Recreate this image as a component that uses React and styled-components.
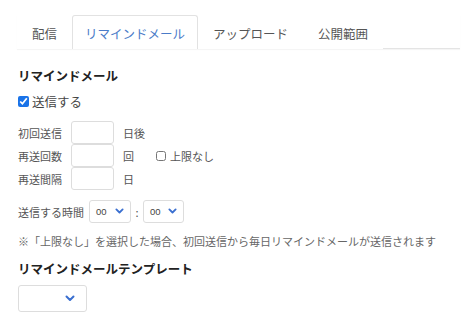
import styled, { createGlobalStyle } from "styled-components";

const GlobalStyle = createGlobalStyle`
  body {
    margin: 0;
    background: #fff;
    font-family: "Noto Sans CJK JP", "Noto Sans", sans-serif;
    color: #333;
  }
`

const tabs = ["配信", "リマインドメール", "アップロード", "公開範囲"];

const Chevron = ({ size = 9 }) => (
  <svg width={size} height={size * 0.7} viewBox="0 0 10 7">
    <polyline points="1.5,1.5 5,5 8.5,1.5" fill="none" stroke="#3a6fd0" strokeWidth="2" strokeLinecap="round" strokeLinejoin="round" />
  </svg>
)

const App = () => {
  return (
    <Page>
      <GlobalStyle />
      <TabBar>
        {tabs.map((t, i) => (
          <Tab key={t} $active={i === 1}>{t}</Tab>
        ))}
      </TabBar>

      <Heading>リマインドメール</Heading>
      <CheckLabel>
        <Check type="checkbox" defaultChecked />
        送信する
      </CheckLabel>

      <Rows>
        <Row>
          <Label>初回送信</Label>
          <NumInput />
          <Unit>日後</Unit>
        </Row>
        <Row>
          <Label>再送回数</Label>
          <NumInput />
          <Unit>回</Unit>
          <SmallCheckLabel>
            <SmallCheck type="checkbox" />
            上限なし
          </SmallCheckLabel>
        </Row>
        <Row>
          <Label>再送間隔</Label>
          <NumInput />
          <Unit>日</Unit>
        </Row>
      </Rows>

      <TimeRow>
        <TimeLabel>送信する時間</TimeLabel>
        <Select $w={42}>
          <SelectValue>00</SelectValue>
          <Chevron />
        </Select>
        <Colon>:</Colon>
        <Select $w={41}>
          <SelectValue>00</SelectValue>
          <Chevron />
        </Select>
      </TimeRow>

      <Note>※「上限なし」を選択した場合、初回送信から毎日リマインドメールが送信されます</Note>

      <Heading2>リマインドメールテンプレート</Heading2>
      <TemplateSelect>
        <Chevron size={10} />
      </TemplateSelect>
    </Page>
  )
}

const Page = styled.div`
  padding: 15px 14px 0 17px;
`
const TabBar = styled.div`
  display: flex;
  height: 33px;
  border-bottom: 1px solid #e4e4e4;
  box-shadow: 0 1px 1px rgba(0, 0, 0, 0.04);
`
const Tab = styled.div`
  display: flex;
  align-items: center;
  padding: 1px ${({ $active }) => ($active ? "12px" : "14px")} 0;
  font-size: 12.5px;
  color: ${({ $active }) => ($active ? "#4a7bc8" : "#555")};
  background: #fff;
  border: 1px solid ${({ $active }) => ($active ? "#e2e2e2" : "transparent")};
  border-bottom: none;
  border-radius: 3px 3px 0 0;
  margin-bottom: -1px;
  height: 34px;
  box-sizing: border-box;
`
const Heading = styled.h2`
  margin: 17px 0 0 1px;
  font-size: 12.5px;
  line-height: 20px;
  font-weight: 700;
  color: #222;
`
const CheckLabel = styled.label`
  display: flex;
  align-items: center;
  gap: 3px;
  margin: 5px 0 0 1px;
  height: 20px;
  font-size: 12.5px;
  color: #444;
`
const Check = styled.input`
  margin: 0;
  width: 11px;
  height: 11px;
  accent-color: #1a73e8;
`
const Rows = styled.div`
  display: flex;
  flex-direction: column;
  margin: 10px 0 0 1px;
`
const Row = styled.div`
  display: flex;
  align-items: center;
  height: 23px;
`
const Label = styled.span`
  width: 53px;
  font-size: 11px;
  color: #555;
`
const NumInput = styled.input`
  width: 43px;
  height: 23px;
  box-sizing: border-box;
  border: 1px solid #ddd;
  border-radius: 3px;
  margin: 0;
  padding: 0 4px;
`
const Unit = styled.span`
  margin-left: 9px;
  font-size: 11px;
  color: #555;
`
const SmallCheckLabel = styled.label`
  display: flex;
  align-items: center;
  gap: 4px;
  margin-left: 22px;
  font-size: 11px;
  color: #555;
`
const SmallCheck = styled.input`
  margin: 0;
  width: 10px;
  height: 10px;
`
const TimeRow = styled.div`
  display: flex;
  align-items: center;
  margin: 10px 0 0 1px;
  height: 23px;
`
const TimeLabel = styled.span`
  font-size: 11px;
  color: #555;
  margin-right: 5px;
`
const Select = styled.div`
  display: flex;
  align-items: center;
  justify-content: space-between;
  width: ${({ $w }) => $w}px;
  height: 23px;
  box-sizing: border-box;
  padding: 0 6px;
  border: 1px solid #ddd;
  border-radius: 3px;
`
const SelectValue = styled.span`
  font-family: "Liberation Sans", Arial, sans-serif;
  font-size: 9.5px;
  color: #444;
`
const Colon = styled.span`
  width: 12px;
  text-align: center;
  font-size: 11px;
  color: #555;
`
const Note = styled.p`
  margin: 10px 0 0 1px;
  font-size: 11px;
  line-height: 16px;
  color: #666;
  white-space: nowrap;
`
const Heading2 = styled.h3`
  margin: 10px 0 0 1px;
  font-size: 12.5px;
  line-height: 20px;
  font-weight: 700;
  color: #222;
`
const TemplateSelect = styled.div`
  display: flex;
  align-items: center;
  justify-content: flex-end;
  margin: 6px 0 0 1px;
  width: 69px;
  height: 27px;
  box-sizing: border-box;
  padding-right: 11px;
  border: 1px solid #ddd;
  border-radius: 3px;
`

export default App
